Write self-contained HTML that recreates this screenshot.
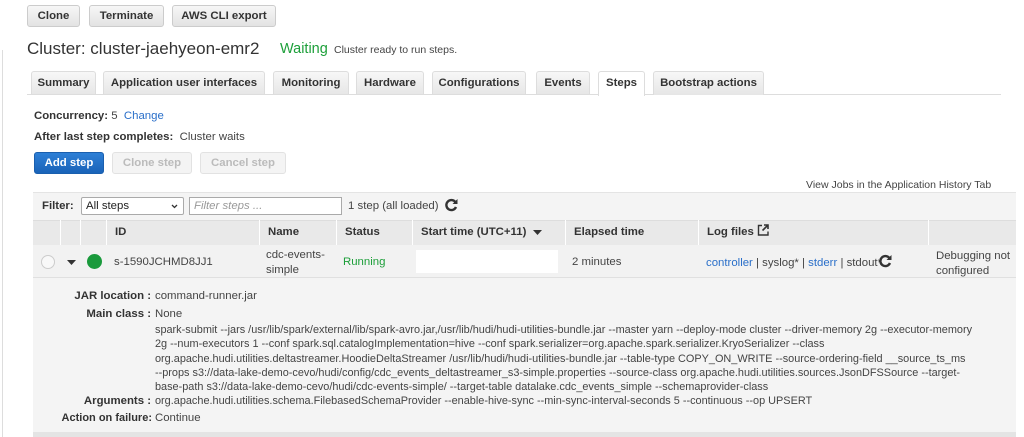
<!DOCTYPE html>
<html><head><meta charset="utf-8"><style>
*{box-sizing:border-box;margin:0;padding:0}
body{width:1024px;height:437px;overflow:hidden;background:#fff;font-family:"Liberation Sans",Arial,sans-serif;font-size:11.4px;color:#444;position:relative}
.a{position:absolute;white-space:nowrap}
.btn{position:absolute;height:22px;border:1px solid #ccc;border-radius:3px;background:linear-gradient(#f7f7f7,#e3e3e3);font-weight:bold;font-size:11.4px;color:#333;text-align:center;line-height:20px}
.tab{position:absolute;top:71px;height:24px;border:1px solid #ddd;border-bottom:none;border-radius:3px 3px 0 0;background:linear-gradient(#f7f7f7,#e6e6e6);font-weight:bold;font-size:11.4px;color:#333;text-align:center;line-height:22px}
.lnk{color:#2a6fc9}
.b{font-weight:bold;color:#333}
.lab{position:absolute;right:873px;font-weight:bold;color:#333;white-space:nowrap}
.val{position:absolute;left:155px;white-space:nowrap;color:#444}
.hd{position:absolute;top:220px;height:25px;border-left:1px solid #fff;font-weight:bold;color:#333;line-height:25px;padding-left:8px}
</style></head><body>
<div class="a" style="left:2px;top:50px;width:1px;height:387px;background:#ddd"></div>
<div class="btn" style="left:27px;top:5px;width:53px">Clone</div>
<div class="btn" style="left:89px;top:5px;width:75px">Terminate</div>
<div class="btn" style="left:172px;top:5px;width:104px">AWS CLI export</div>
<div class="a" style="left:27px;top:39px;font-size:17px;color:#333">Cluster: cluster-jaehyeon-emr2</div>
<div class="a" style="left:280px;top:41px;font-size:14.5px;color:#1d9f3a">Waiting</div>
<div class="a" style="left:334px;top:44px;font-size:10.5px;color:#444">Cluster ready to run steps.</div>
<div class="tab" style="left:31px;width:65px">Summary</div>
<div class="tab" style="left:103px;width:162px">Application user interfaces</div>
<div class="tab" style="left:273px;width:76px">Monitoring</div>
<div class="tab" style="left:356px;width:68px">Hardware</div>
<div class="tab" style="left:432px;width:94px">Configurations</div>
<div class="tab" style="left:536px;width:54px">Events</div>
<div class="a" style="left:27px;top:94px;width:974px;height:1px;background:#ddd"></div>
<div class="tab" style="left:598px;width:47px;background:#fff;height:25px">Steps</div>
<div class="tab" style="left:653px;width:111px">Bootstrap actions</div>
<div class="a" style="left:34px;top:110px"><span class="b">Concurrency:</span> 5 &nbsp;<span class="lnk">Change</span></div>
<div class="a" style="left:34px;top:131px"><span class="b">After last step completes:</span>&nbsp; Cluster waits</div>
<div class="btn" style="left:34px;top:152px;width:70px;background:linear-gradient(#2d7fd6,#1a63b8);border-color:#1a5fae;color:#fff">Add step</div>
<div class="btn" style="left:112px;top:152px;width:80px;background:#f4f4f4;border-color:#e2e2e2;color:#bbb">Clone step</div>
<div class="btn" style="left:200px;top:152px;width:86px;background:#f4f4f4;border-color:#e2e2e2;color:#bbb">Cancel step</div>
<div class="a" style="left:806px;top:179px;font-size:10.5px;color:#444">View Jobs in the Application History Tab</div>
<div class="a" style="left:33px;top:192px;width:983px;height:240px;background:#f4f4f4;border-top:1px solid #e4e4e4"></div>
<div class="a" style="left:42px;top:200px" ><span class="b">Filter:</span></div>
<div class="a" style="left:81px;top:197px;width:103px;height:18px;border:1px solid #aaa;border-radius:2px;background:#fff;padding-left:4px;line-height:16px;color:#222">All steps<svg style="position:absolute;right:5px;top:6px" width="7" height="5"><path d="M1 1l2.5 2.5L6 1" stroke="#333" stroke-width="1.3" fill="none"/></svg></div>
<div class="a" style="left:189px;top:197px;width:153px;height:18px;border:1px solid #aaa;background:#fff;padding-left:4px;line-height:16px;color:#999;font-style:italic">Filter steps ...</div>
<div class="a" style="left:348px;top:200px">1 step (all loaded)</div>
<svg class="a" style="left:444px;top:198px" width="14" height="14" viewBox="0 0 14 14"><path d="M11.5 4.2A5 5 0 1 0 12 9" stroke="#333" stroke-width="2.4" fill="none"/><path d="M13.5 1v5h-5z" fill="#333"/></svg>
<div class="a" style="left:33px;top:220px;width:983px;height:25px;background:#e9e9e9;border-top:1px solid #ddd"></div>
<div class="hd" style="left:60px;width:20px"></div><div class="hd" style="left:80px;width:26px"></div>
<div class="hd" style="left:106px">ID</div>
<div class="hd" style="left:259px">Name</div>
<div class="hd" style="left:336px">Status</div>
<div class="hd" style="left:412px">Start time (UTC+11) &nbsp;<svg width="9" height="5"><path d="M0 0h9L4.5 5z" fill="#333"/></svg></div>
<div class="hd" style="left:565px">Elapsed time</div>
<div class="hd" style="left:698px">Log files <svg width="12" height="12" style="vertical-align:-1px"><path d="M5 1.5H1.5v9.5h9.5V7.5" stroke="#333" stroke-width="1.4" fill="none"/><path d="M7 1h4v4M11 1L5.5 6.5" stroke="#333" stroke-width="1.6" fill="none"/></svg></div>
<div class="hd" style="left:928px"></div>
<div class="a" style="left:33px;top:245px;width:983px;height:33px;background:#f2f2f2;border-bottom:1px solid #e0e0e0"></div>
<div class="a" style="left:41px;top:255px;width:14px;height:14px;border-radius:50%;border:1px solid #ccc;background:#f8f8f8"></div>
<svg class="a" style="left:67px;top:260px" width="9" height="5"><path d="M0 0h9L4.5 5z" fill="#333"/></svg>
<div class="a" style="left:87px;top:254px;width:15px;height:15px;border-radius:50%;background:#1a9a3c"></div>
<div class="a" style="left:114px;top:256px">s-1590JCHMD8JJ1</div>
<div class="a" style="left:266px;top:248px;line-height:15px">cdc-events-<br>simple</div>
<div class="a" style="left:343px;top:256px;color:#1d9f3a">Running</div>
<div class="a" style="left:416px;top:250px;width:142px;height:23px;background:#fff"></div>
<div class="a" style="left:572px;top:256px">2 minutes</div>
<div class="a" style="left:706px;top:257px"><span class="lnk">controller</span> | syslog* | <span class="lnk">stderr</span> | stdout*</div>
<svg class="a" style="left:878px;top:254px" width="14" height="14" viewBox="0 0 14 14"><path d="M11.5 4.2A5 5 0 1 0 12 9" stroke="#333" stroke-width="2.4" fill="none"/><path d="M13.5 1v5h-5z" fill="#333"/></svg>
<div class="a" style="left:936px;top:249px;line-height:15px">Debugging not<br>configured</div>
<div class="lab" style="top:290px">JAR location :</div><div class="val" style="top:290px">command-runner.jar</div>
<div class="lab" style="top:308px">Main class :</div><div class="val" style="top:308px">None</div>
<div class="val" style="top:323px;line-height:14.3px;font-size:10.9px">spark-submit --jars /usr/lib/spark/external/lib/spark-avro.jar,/usr/lib/hudi/hudi-utilities-bundle.jar --master yarn --deploy-mode cluster --driver-memory 2g --executor-memory<br>2g --num-executors 1 --conf spark.sql.catalogImplementation=hive --conf spark.serializer=org.apache.spark.serializer.KryoSerializer --class<br>org.apache.hudi.utilities.deltastreamer.HoodieDeltaStreamer /usr/lib/hudi/hudi-utilities-bundle.jar --table-type COPY_ON_WRITE --source-ordering-field __source_ts_ms<br>--props s3://data-lake-demo-cevo/hudi/config/cdc_events_deltastreamer_s3-simple.properties --source-class org.apache.hudi.utilities.sources.JsonDFSSource --target-<br>base-path s3://data-lake-demo-cevo/hudi/cdc-events-simple/ --target-table datalake.cdc_events_simple --schemaprovider-class<br>org.apache.hudi.utilities.schema.FilebasedSchemaProvider --enable-hive-sync --min-sync-interval-seconds 5 --continuous --op UPSERT</div>
<div class="lab" style="top:395px">Arguments :</div>
<div class="lab" style="top:412px;right:872px;font-size:11px">Action on failure:</div><div class="val" style="top:412px">Continue</div>
<div class="a" style="left:33px;top:432px;width:983px;height:5px;background:#e4e4e4"></div>
</body></html>
